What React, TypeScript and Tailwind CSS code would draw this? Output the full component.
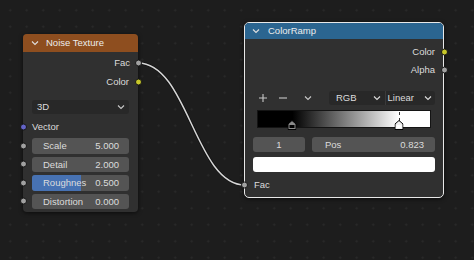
import React from "react";

const Socket = ({ color, className }: { color: string; className: string }) => (
  <span
    className={`absolute top-1/2 -translate-y-1/2 w-[7px] h-[7px] rounded-full border border-[#161616] ${className}`}
    style={{ backgroundColor: color }}
  />
);

const Chevron = ({ className = "" }: { className?: string }) => (
  <svg width="8" height="6" viewBox="0 0 8 6" className={className}>
    <path d="M1 1.5 L4 4.5 L7 1.5" fill="none" stroke="currentColor" strokeWidth="1.1" />
  </svg>
);

const Field = ({ label, value, fill }: { label: string; value: string; fill?: number }) => (
  <div className="relative h-[15.5px] px-[9px]">
    <Socket color="#a1a1a1" className="left-[-3.5px]" />
    <div className="relative h-full rounded-[3px] bg-[#545454] overflow-hidden flex items-center justify-between pl-[11px] pr-[10px]">
      {fill !== undefined && (
        <div className="absolute left-0 top-0 bottom-0 bg-[#4772b3]" style={{ width: `${fill}%` }} />
      )}
      <span className="relative">{label}</span>
      <span className="relative">{value}</span>
    </div>
  </div>
);

const Marker = ({ active }: { active?: boolean }) => (
  <svg width="9" height="10" viewBox="0 0 9 10" className="absolute bottom-[-3px] -translate-x-1/2">
    <path
      d="M0.5 4 L4.5 0.5 L8.5 4 L8.5 9.5 L0.5 9.5 Z"
      fill={active ? "#f0f0f0" : "#8a8a8a"}
      stroke="#000"
      strokeWidth="1"
    />
    <rect x="2" y="5" width="5" height="3" fill={active ? "#ffffff" : "#000"} />
  </svg>
);

export default function App() {
  return (
    <div
      className="relative w-[474px] h-[260px] overflow-hidden bg-[#1d1d1d] bg-[radial-gradient(circle,#2a2a2a_0.9px,transparent_1.2px)] bg-[size:16.5px_16.5px] bg-[position:2px_2px] text-[#dcdcdc] text-[9.5px] leading-none"
      style={{ fontFamily: '"Liberation Sans", Arial, sans-serif' }}
    >
      {/* wire */}
      <svg className="absolute inset-0" width="474" height="260">
        <path d="M138 63 C 188 63, 195 185, 245 185" fill="none" stroke="#111" strokeWidth="3" />
        <path d="M138 63 C 188 63, 195 185, 245 185" fill="none" stroke="#d6d6d6" strokeWidth="1.5" />
      </svg>

      {/* Noise Texture node */}
      <div className="absolute left-[23px] top-[34px] w-[115px] h-[178px] rounded-[4px] bg-[#303030] shadow-[0_1px_4px_rgba(0,0,0,0.6)] flex flex-col">
        <div className="h-[18px] shrink-0 rounded-t-[4px] bg-[#8e4e1f] flex items-center pl-[8px] gap-[7px] text-[#ececec] text-[9.5px]">
          <Chevron className="text-[#e0e0e0]" />
          <span>Noise Texture</span>
        </div>
        <div className="pt-[2px] flex flex-col">
          <div className="relative h-[18px] flex items-center justify-end pr-[8px]">
            Fac
            <Socket color="#a1a1a1" className="right-[-4px]" />
          </div>
          <div className="relative h-[19px] flex items-center justify-end pr-[9px]">
            Color
            <Socket color="#c7c729" className="right-[-4px]" />
          </div>
          <div className="mt-[9px] px-[9px]">
            <div className="h-[14px] rounded-[3px] bg-[#282828] flex items-center justify-between pl-[5px] pr-[4px]">
              <span>3D</span>
              <Chevron className="text-[#c8c8c8]" />
            </div>
          </div>
          <div className="relative mt-[4px] h-[18px] flex items-center pl-[9px]">
            Vector
            <Socket color="#6363c7" className="left-[-3.5px]" />
          </div>
          <div className="mt-[2px] flex flex-col gap-[3px]">
            <Field label="Scale" value="5.000" />
            <Field label="Detail" value="2.000" />
            <Field label="Roughnes" value="0.500" fill={50} />
            <Field label="Distortion" value="0.000" />
          </div>
        </div>
      </div>

      {/* ColorRamp node */}
      <div className="absolute left-[244px] top-[22px] w-[200px] h-[176px] rounded-[5px] border border-[#e8e8e8] bg-[#303030] shadow-[0_1px_4px_rgba(0,0,0,0.6)] flex flex-col">
        <div className="h-[16px] shrink-0 rounded-t-[4px] bg-[#2b6590] flex items-center pl-[7px] gap-[8px] text-[#ececec] text-[9.5px]">
          <Chevron className="text-[#e0e0e0]" />
          <span>ColorRamp</span>
        </div>
        <div className="pt-[4px] flex flex-col">
          <div className="relative h-[18px] flex items-center justify-end pr-[8px]">
            Color
            <Socket color="#c7c729" className="right-[-4.5px]" />
          </div>
          <div className="relative h-[18px] flex items-center justify-end pr-[8px]">
            Alpha
            <Socket color="#a1a1a1" className="right-[-4.5px]" />
          </div>
          <div className="mt-[12px] h-[14px] flex items-center px-[8px]">
            <div className="flex items-center text-[#c8c8c8]">
              <svg width="10" height="10" viewBox="0 0 10 10" className="ml-[5px]">
                <path d="M5 1 V9 M1 5 H9" stroke="currentColor" strokeWidth="1.1" />
              </svg>
              <svg width="10" height="10" viewBox="0 0 10 10" className="ml-[10px]">
                <path d="M1 5 H9" stroke="currentColor" strokeWidth="1.1" />
              </svg>
              <Chevron className="ml-[16px] text-[#c8c8c8]" />
            </div>
            <div className="ml-auto flex h-full w-[106px] rounded-[3px] bg-[#282828]">
              <div className="flex-1 flex items-center justify-between pl-[7px] pr-[4px] border-r border-[#3a3a3a]">
                <span>RGB</span>
                <Chevron />
              </div>
              <div className="flex-1 flex items-center justify-between pl-[2px] pr-[3px]">
                <span>Linear</span>
                <Chevron />
              </div>
            </div>
          </div>
          <div className="mt-[5px] mx-[12px] relative h-[18px] border border-[#141414] bg-[linear-gradient(to_right,#000_0%,#000_20%,#fff_82%,#fff_100%)]">
            <div className="absolute left-[20%] bottom-0">
              <Marker />
            </div>
            <div className="absolute left-[82%] top-0 bottom-0">
              <div className="absolute left-[-0.5px] top-[1px] h-[9px] border-l border-dashed border-[#333]" />
              <Marker active />
            </div>
          </div>
          <div className="mt-[9px] px-[8px] flex gap-[7px] h-[15px]">
            <div className="w-[52px] rounded-[3px] bg-[#545454] flex items-center justify-center">1</div>
            <div className="flex-1 rounded-[3px] bg-[#545454] flex items-center justify-between pl-[13px] pr-[11px]">
              <span>Pos</span>
              <span>0.823</span>
            </div>
          </div>
          <div className="mt-[5px] mx-[8px] h-[15px] rounded-[3px] bg-white" />
          <div className="relative mt-[4px] h-[18px] flex items-center pl-[9px]">
            Fac
            <Socket color="#a1a1a1" className="left-[-4.5px]" />
          </div>
        </div>
      </div>
    </div>
  );
}
